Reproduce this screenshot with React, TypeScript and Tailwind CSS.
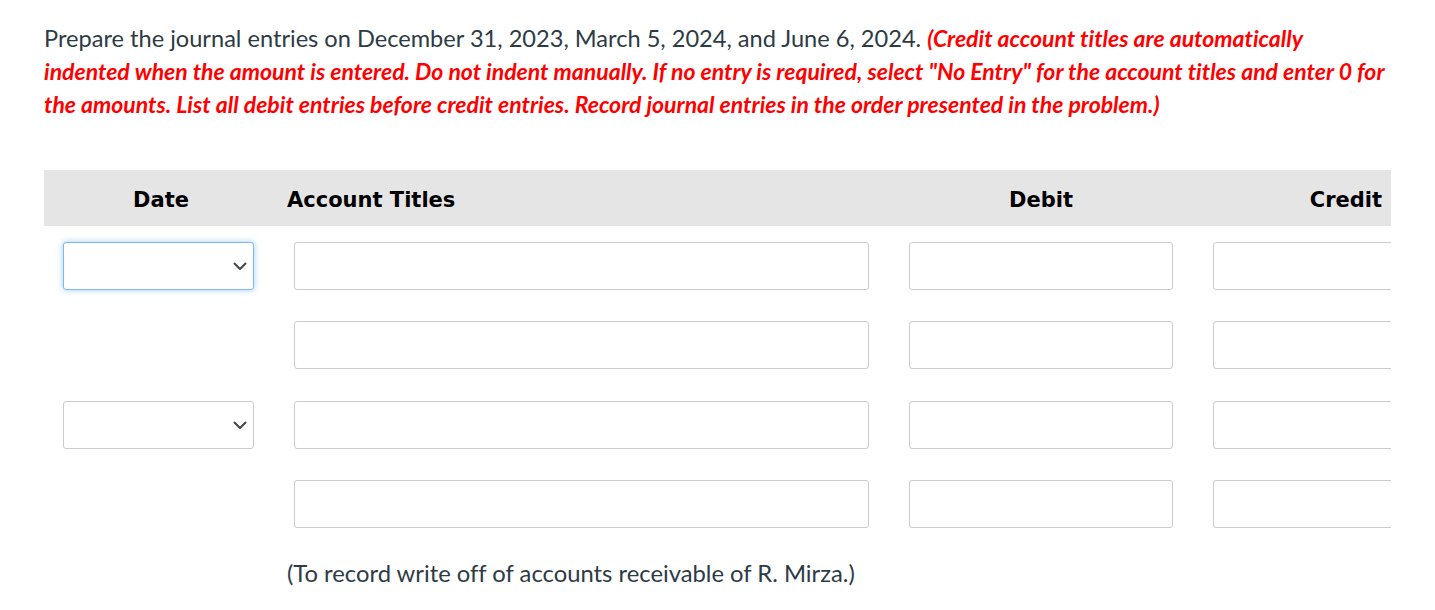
const rows = [
  { date: true, focused: true },
  { date: false, focused: false },
  { date: true, focused: false },
  { date: false, focused: false },
];

function Field({ className = "" }: { className?: string }) {
  return <div className={`h-12 rounded-[3px] border border-[#cbcbcb] bg-white ${className}`} />;
}

function Chevron() {
  return (
    <svg width="14" height="9" viewBox="0 0 14 9" fill="none" className="text-[#444]">
      <path d="M1.5 1.5 L7 7 L12.5 1.5" stroke="currentColor" strokeWidth="2" strokeLinecap="round" strokeLinejoin="round" />
    </svg>
  );
}

export default function App() {
  return (
    <div className="min-h-screen bg-white font-['Lato',sans-serif] [font-variant-ligatures:none]">
      <div className="pl-[44px] pt-[22px] pr-[44px]">
        <p className="w-[1347px] text-[23.6px] leading-[33px] text-[#2d3b45]">
          Prepare the journal entries on December 31, 2023, March 5, 2024, and June 6, 2024.{" "}
          <span className="text-[23px] font-bold italic text-[#ff0000]">
            (Credit account titles are automatically
            <br />
            indented when the amount is entered. Do not indent manually. If no entry is required, select "No
            Entry" for the account titles and enter 0 for
            <br />
            the amounts. List all debit entries before credit entries. Record journal entries in the order
            presented in the problem.)
          </span>
        </p>

        <div className="mt-[49px] w-[1347px] overflow-hidden">
          <div className="flex h-[56px] items-center bg-[#e5e5e5] pt-[5px] font-['DejaVu_Sans',sans-serif] text-[21px] font-bold text-black">
            <div className="w-[230px] shrink-0 pl-[4px] text-center">Date</div>
            <div className="w-[615px] shrink-0 pl-[13px]">Account Titles</div>
            <div className="w-[304px] shrink-0 text-center">Debit</div>
            <div className="flex-1 pr-[9px] text-right">Credit</div>
          </div>

          <div className="flex flex-col gap-[31.4px] pt-[16px]">
            {rows.map((r, i) => (
              <div key={i} className="flex">
                <div className="w-[230px] shrink-0 pl-[19px] pr-[20px]">
                  {r.date && (
                    <div
                      className={`flex h-12 items-center justify-end rounded-[3px] border bg-white pr-[6px] pt-[1px] ${
                        r.focused
                          ? "border-[#7cb9f2] shadow-[0_0_6px_rgba(102,175,233,0.6)]"
                          : "border-[#cbcbcb]"
                      }`}
                    >
                      <Chevron />
                    </div>
                  )}
                </div>
                <div className="w-[615px] shrink-0 px-[20px]">
                  <Field />
                </div>
                <div className="w-[304px] shrink-0 px-[20px]">
                  <Field />
                </div>
                <div className="w-[280px] shrink-0 pl-[20px]">
                  <Field />
                </div>
              </div>
            ))}
          </div>

          <p className="pl-[243px] pt-[29px] text-[23.8px] leading-[33px] text-[#2d3b45]">
            (To record write off of accounts receivable of R. Mirza.)
          </p>
        </div>
      </div>
    </div>
  );
}
